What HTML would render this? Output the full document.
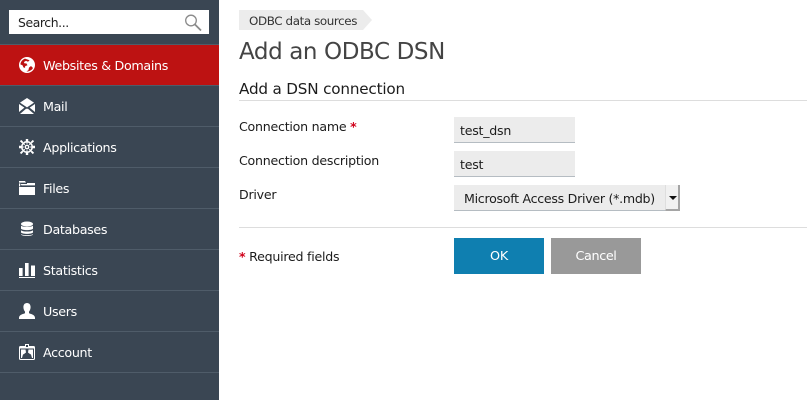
<!DOCTYPE html>
<html><head><meta charset="utf-8"><style>
html,body{margin:0;padding:0;width:807px;height:400px;overflow:hidden;background:#fff}
*{box-sizing:border-box}
.t{position:absolute;white-space:nowrap;font-family:"DejaVu Sans","Liberation Sans",sans-serif;font-size:12.6px;letter-spacing:-.24px;line-height:16px;color:#1c1c1c}
.b{position:absolute}
.t.nav{color:#fff;left:43px;font-size:12.7px;letter-spacing:-.33px}
.sep{position:absolute;left:0;width:219px;height:1px;background:#4f5c69}
svg{position:absolute;left:19px;width:16px;height:16px;fill:#fff}
.r{color:#d0021b;font-weight:bold}
</style></head><body>
<div class="b" style="left:0;top:0;width:219px;height:400px;background:#3a4653"></div>
<div class="b" style="left:9px;top:10px;width:200px;height:24px;background:#fff"></div>
<div class="t" style="left:18px;top:15px;color:#222;font-size:12.4px;letter-spacing:-.4px">Search...</div>
<svg style="left:184px;top:14px;width:18px;height:18px;fill:none;stroke:#8a8a8a;stroke-width:1.3" viewBox="0 0 18 18"><circle cx="7" cy="6.5" r="5.3"/><path d="M11 10.5L17 16.5" stroke-width="1.8"/></svg>
<div class="sep" style="top:44px"></div>
<div class="b" style="left:0;top:45px;width:219px;height:40px;background:#bd1212"></div>
<div class="sep" style="top:85px"></div>
<div class="sep" style="top:126px"></div>
<div class="sep" style="top:167px"></div>
<div class="sep" style="top:208px"></div>
<div class="sep" style="top:249px"></div>
<div class="sep" style="top:290px"></div>
<div class="sep" style="top:331px"></div>
<div class="sep" style="top:372px"></div>

<svg style="top:57px" viewBox="0 0 16 16"><path fill-rule="evenodd" d="M8 0a8 8 0 1 1 0 16A8 8 0 0 1 8 0zM6 1.600C3.600 2.400 1.600 4.700 1.400 7.400l2.200 1 .8 2 1.600.5.2-1.800 2.300-.8-1-1.800-2.200-.2L5 5l2-1.200 2 1 1.600-1.600zM12 9l-2 1.600-.6 2.600-2 1.200c2.600.3 5.300-1 6.600-3.400z"/></svg>
<div class="t nav" style="top:58px">Websites &amp; Domains</div>

<svg style="top:98px" viewBox="0 0 16 16"><path d="M8 0l7 4.600L8 9.400 1 4.600z"/><path d="M0 6l5.400 3.600L0 14zM16 6l-5.400 3.600L16 14zM1 16l6-5.200h2l6 5.200z"/></svg>
<div class="t nav" style="top:99px">Mail</div>

<svg style="top:139px" viewBox="0 0 16 16"><circle cx="8" cy="8" r="5.200" fill="none" stroke="#fff" stroke-width="1.500"/><circle cx="8" cy="8" r="1.800" fill="none" stroke="#fff" stroke-width="1.300"/><path d="M8 1v14M1 8h14M3 3l10 10M13 3L3 13" stroke="#fff" stroke-width="1"/><path d="M6.800 0h2.400v2.400H6.800zM6.800 13.600h2.400V16H6.800zM0 6.800h2.400v2.400H0zM13.600 6.800H16v2.400h-2.400zM2.200.9l1.900 1.900-1.300 1.300L.9 2.200zM13.800.9l1.300 1.300-1.900 1.900-1.300-1.300zM2.800 11.900l1.300 1.300-1.900 1.900-1.300-1.300zM13.200 11.900l1.900 1.900-1.300 1.300-1.900-1.900z"/><circle cx="8" cy="8" r="3.200" fill="#3a4653"/><circle cx="8" cy="8" r="2.400"/><circle cx="8" cy="8" r="1" fill="#3a4653"/></svg>
<div class="t nav" style="top:140px">Applications</div>

<svg style="top:180px" viewBox="0 0 16 16"><path d="M0 1h6l1 1.600H0zM8 3h8v2.400H2.500L1.500 4H8z"/><path d="M0 7h16v8H0z"/><path d="M0 3.400h1.200v3H0z"/></svg>
<div class="t nav" style="top:181px">Files</div>

<svg style="top:221px" viewBox="0 0 16 16"><ellipse cx="8" cy="3" rx="6" ry="2.500"/><path d="M2 4.600c1 1.600 11 1.600 12 0v3c-1 2-11 2-12 0zM2 9.200c1 1.700 11 1.700 12 0v2.200c-1 2-11 2-12 0zM2 13c1 1.600 11 1.600 12 0v.4c-.8 2.200-11.200 2.200-12 0z"/></svg>
<div class="t nav" style="top:222px">Databases</div>

<svg style="top:262px" viewBox="0 0 16 16"><path d="M0 6h3.600v8H0zM6 1h3.600v13H6zM12 3.500h4V14h-4zM0 15h16v1H0z"/></svg>
<div class="t nav" style="top:263px">Statistics</div>

<svg style="top:303px" viewBox="0 0 16 16"><path d="M8 0c2.300 0 3.600 1.800 3.600 4 0 2-.7 3.600-1.600 4.600v1.600c1.600.8 6 1.300 6 4.600V16H0v-1.200c0-3.300 4.400-3.800 6-4.600V8.600C5.100 7.600 4.400 6 4.400 4 4.400 1.800 5.700 0 8 0z"/></svg>
<div class="t nav" style="top:304px">Users</div>

<svg style="top:344px" viewBox="0 0 16 16"><path fill-rule="evenodd" d="M6 0h4v2h4.500A1.500 1.500 0 0 1 16 3.500v11a1.500 1.500 0 0 1-1.500 1.500h-13A1.500 1.500 0 0 1 0 14.500v-11A1.500 1.500 0 0 1 1.500 2H6zM1 4.500v10l.5.500h13l.5-.5v-10zM7 1v2h2V1z"/><path d="M2 5.500h4.500L7 8.500 5 10l-1 .5L3 14H2zM9.500 5.500H14V14h-1l-1-3.500-1-.5-2-1.500z"/></svg>
<div class="t nav" style="top:345px">Account</div>

<svg style="left:239px;top:10px;width:133px;height:20px;fill:#ececec" viewBox="0 0 133 20"><path d="M0 0h124l9 10-9 10H0z"/></svg>
<div class="t" style="left:249px;top:13px;font-size:11.900px;letter-spacing:-.4px;color:#333">ODBC data sources</div>
<div class="t" style="left:239px;top:37px;font-size:23px;letter-spacing:-.4px;line-height:30px;color:#444">Add an ODBC DSN</div>
<div class="t" style="left:239px;top:80px;font-size:15.200px;letter-spacing:-.18px;line-height:18px;color:#1c1c1c">Add a DSN connection</div>
<div class="b" style="left:239px;top:100px;width:568px;height:1px;background:#ddd"></div>

<div class="t" style="left:239px;top:119px">Connection name <span class="r">*</span></div>
<div class="t" style="left:239px;top:153px">Connection description</div>
<div class="t" style="left:239px;top:187px">Driver</div>

<div class="b" style="left:454px;top:117px;width:121px;height:26px;background:#ececec;border-bottom:1px solid #b5bcc2"></div>
<div class="t" style="left:460px;top:123px">test_dsn</div>
<div class="b" style="left:454px;top:151px;width:121px;height:26px;background:#ececec;border-bottom:1px solid #b5bcc2"></div>
<div class="t" style="left:460px;top:157px">test</div>

<div class="b" style="left:454px;top:185px;width:226px;height:26px;background:#ececec;border-bottom:1px solid #b5bcc2"></div>
<div class="b" style="left:665px;top:185px;width:15px;height:26px;background:#f1f1f1;border-left:1px solid #dedede;border-right:2px solid #a5a5a5;border-bottom:2px solid #a5a5a5"></div>
<div class="b" style="left:669px;top:196px;width:0;height:0;border-left:4px solid transparent;border-right:4px solid transparent;border-top:4px solid #111"></div>
<div class="t" style="left:464px;top:191px;letter-spacing:-.28px">Microsoft Access Driver (*.mdb)</div>

<div class="b" style="left:239px;top:227px;width:568px;height:1px;background:#ddd"></div>
<div class="t" style="left:239px;top:249px"><span class="r">*</span> Required fields</div>
<div class="b" style="left:454px;top:238px;width:90px;height:36px;background:#0f7fb0"></div>
<div class="t" style="left:454px;top:249px;width:90px;text-align:center;color:#fff;font-size:12.800px;letter-spacing:-.2px">OK</div>
<div class="b" style="left:551px;top:238px;width:90px;height:36px;background:#999"></div>
<div class="t" style="left:551px;top:249px;width:90px;text-align:center;color:#fff;font-size:12.800px;letter-spacing:-.4px">Cancel</div>
</body></html>
